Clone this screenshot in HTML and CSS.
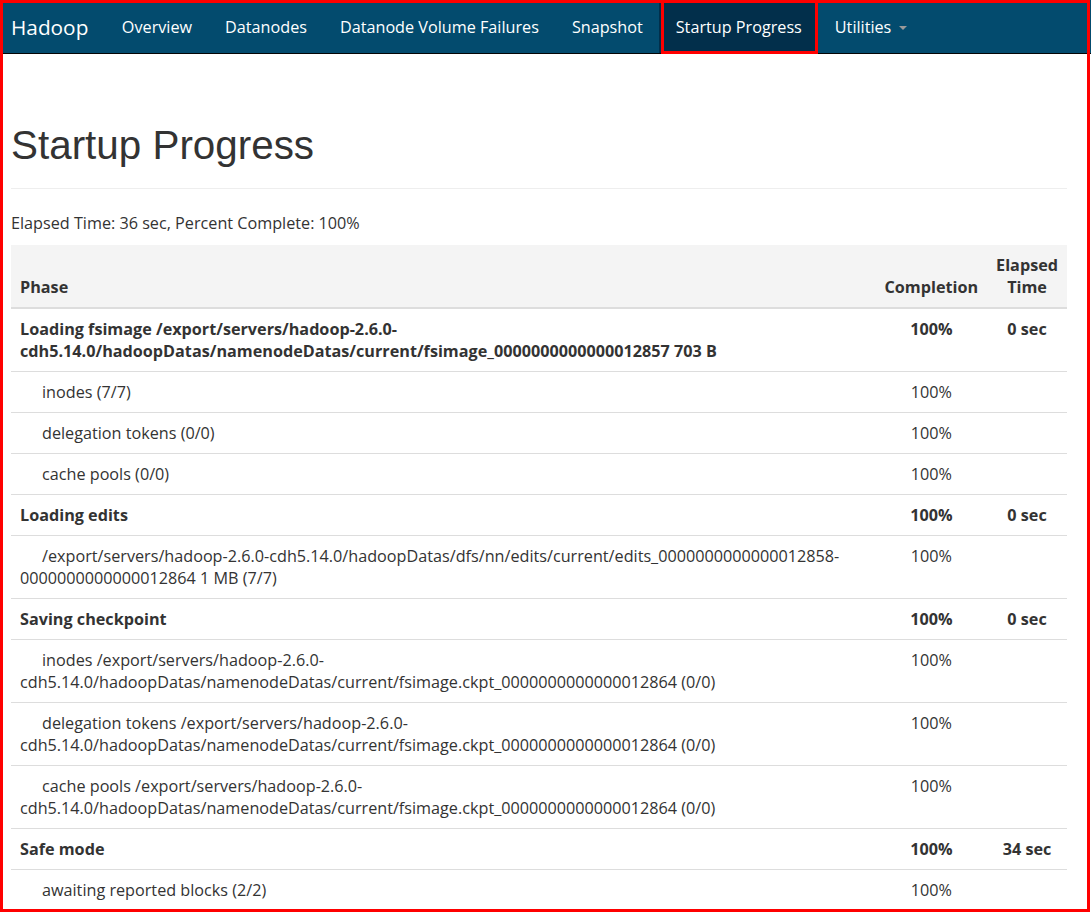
FILE: index.html
```html
<!DOCTYPE html>
<html lang="en">
<head>
<meta charset="utf-8">
<title>Startup Progress</title>
<link rel="stylesheet" href="styles.css">
</head>
<body>
<div class="frame"></div>
<header class="navbar">
  <a class="brand" href="#">Hadoop</a>
  <ul class="nav">
    <li><a href="#">Overview</a></li>
    <li><a href="#">Datanodes</a></li>
    <li><a href="#">Datanode Volume Failures</a></li>
    <li><a href="#">Snapshot</a></li>
    <li class="active"><a href="#">Startup Progress</a></li>
    <li><a href="#">Utilities <span class="caret"></span></a></li>
  </ul>
</header>
<main class="container">
  <div class="page-header"><h1>Startup Progress</h1></div>
  <p class="summary">Elapsed Time: 36 sec, Percent Complete: 100%</p>
  <table class="progress">
    <thead>
      <tr>
        <th class="phase">Phase</th>
        <th class="comp">Completion</th>
        <th class="elap">Elapsed Time</th>
      </tr>
    </thead>
    <tbody>
      <tr class="main">
        <td>Loading fsimage /export/servers/hadoop-2.6.0-cdh5.14.0/hadoopDatas/namenodeDatas/current/fsimage_0000000000000012857 703 B</td>
        <td class="num">100%</td>
        <td class="num">0 sec</td>
      </tr>
      <tr class="sub"><td>inodes (7/7)</td><td class="num">100%</td><td></td></tr>
      <tr class="sub"><td>delegation tokens (0/0)</td><td class="num">100%</td><td></td></tr>
      <tr class="sub"><td>cache pools (0/0)</td><td class="num">100%</td><td></td></tr>
      <tr class="main">
        <td>Loading edits</td>
        <td class="num">100%</td>
        <td class="num">0 sec</td>
      </tr>
      <tr class="sub"><td>/export/servers/hadoop-2.6.0-cdh5.14.0/hadoopDatas/dfs/nn/edits/current/edits_0000000000000012858-0000000000000012864 1 MB (7/7)</td><td class="num">100%</td><td></td></tr>
      <tr class="main">
        <td>Saving checkpoint</td>
        <td class="num">100%</td>
        <td class="num">0 sec</td>
      </tr>
      <tr class="sub"><td>inodes /export/servers/hadoop-2.6.0-cdh5.14.0/hadoopDatas/namenodeDatas/current/fsimage.ckpt_0000000000000012864 (0/0)</td><td class="num">100%</td><td></td></tr>
      <tr class="sub"><td>delegation tokens /export/servers/hadoop-2.6.0-cdh5.14.0/hadoopDatas/namenodeDatas/current/fsimage.ckpt_0000000000000012864 (0/0)</td><td class="num">100%</td><td></td></tr>
      <tr class="sub"><td>cache pools /export/servers/hadoop-2.6.0-cdh5.14.0/hadoopDatas/namenodeDatas/current/fsimage.ckpt_0000000000000012864 (0/0)</td><td class="num">100%</td><td></td></tr>
      <tr class="main">
        <td>Safe mode</td>
        <td class="num">100%</td>
        <td class="num">34 sec</td>
      </tr>
      <tr class="sub"><td>awaiting reported blocks (2/2)</td><td class="num">100%</td><td></td></tr>
    </tbody>
  </table>
</main>
</body>
</html>
```
FILE: styles.css
```css
html, body {
  margin: 0;
  padding: 0;
  background: #fff;
}
body {
  font-family: "Open Sans", "Noto Sans", sans-serif;
  font-size: 16.2px;
  line-height: 22px;
  color: #333;
}
.frame {
  position: fixed;
  top: 0;
  left: 0;
  right: 1px;
  bottom: 0;
  border: 3px solid #ff0000;
  pointer-events: none;
  z-index: 10;
}
.navbar {
  display: flex;
  align-items: stretch;
  height: 53px;
  background: #034b6e;
  border-bottom: 1px solid #050505;
}
.brand {
  display: flex;
  align-items: center;
  padding: 0 17px 0 11px;
  font-size: 20.8px;
  color: #fff;
  text-decoration: none;
}
.nav {
  display: flex;
  margin: 0;
  padding: 0;
  list-style: none;
}
.nav li {
  display: flex;
  position: relative;
}
.nav a {
  display: flex;
  align-items: center;
  padding: 0 16.5px;
  color: #fff;
  text-decoration: none;
  font-size: 16.2px;
}
.nav .active a {
  background: #022f4b;
}
.nav .active::after {
  content: "";
  position: absolute;
  top: 0;
  left: 2px;
  right: 0;
  bottom: -1px;
  border: 3px solid #ff0000;
  pointer-events: none;
}
.caret {
  display: inline-block;
  width: 0;
  height: 0;
  margin-left: 8px;
  margin-top: 2px;
  border-top: 4.5px solid #9a9a9a;
  border-left: 4.5px solid transparent;
  border-right: 4.5px solid transparent;
}
.container {
  padding: 0 24px 0 11px;
}
.page-header {
  margin-top: 69px;
  padding-bottom: 21px;
  border-bottom: 1px solid #eee;
}
.page-header h1 {
  margin: 0;
  font-family: "Liberation Sans", Arial, sans-serif;
  font-weight: 400;
  font-size: 40.4px;
  line-height: 44px;
  color: #333;
}
.summary {
  margin: 23px 0 11px;
}
.progress {
  width: 100%;
  border-collapse: collapse;
  border-spacing: 0;
}
.progress th,
.progress td {
  padding: 9px;
  line-height: 22px;
  text-align: left;
}
.progress thead th {
  background: #f4f4f4;
  font-weight: 700;
  vertical-align: bottom;
  border-bottom: 2px solid #ddd;
}
.progress td {
  vertical-align: top;
  border-top: 1px solid #ddd;
}
.progress tbody tr:first-child td {
  border-top: 0;
}
.progress .comp {
  width: 92px;
  text-align: center;
}
.progress .elap {
  width: 61px;
  text-align: center;
}
.progress td.num {
  text-align: center;
}
.progress tr.main td {
  font-weight: 700;
}
.progress tr.sub td:first-child {
  text-indent: 22px;
}
```
